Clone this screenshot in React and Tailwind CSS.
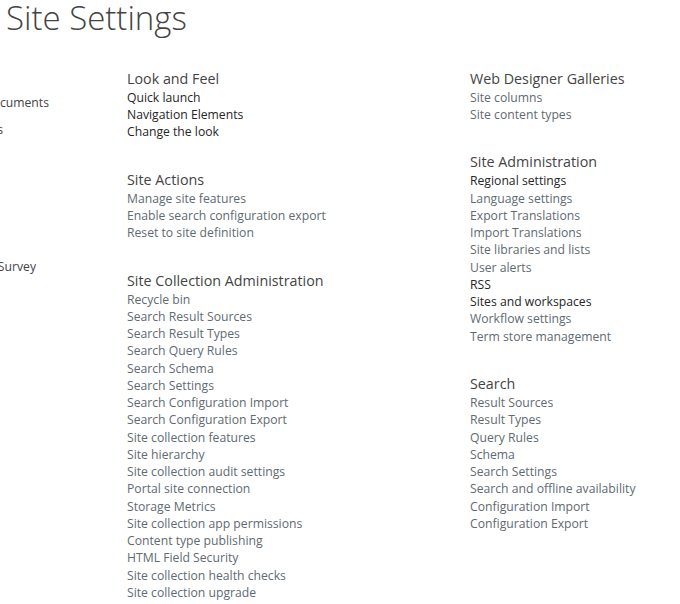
const LOOK_AND_FEEL = [
  { label: "Quick launch", dark: true },
  { label: "Navigation Elements", dark: true },
  { label: "Change the look", dark: true },
];

const SITE_ACTIONS = [
  { label: "Manage site features" },
  { label: "Enable search configuration export" },
  { label: "Reset to site definition" },
];

const SITE_COLLECTION_ADMIN = [
  { label: "Recycle bin" },
  { label: "Search Result Sources" },
  { label: "Search Result Types" },
  { label: "Search Query Rules" },
  { label: "Search Schema" },
  { label: "Search Settings" },
  { label: "Search Configuration Import" },
  { label: "Search Configuration Export" },
  { label: "Site collection features" },
  { label: "Site hierarchy" },
  { label: "Site collection audit settings" },
  { label: "Portal site connection" },
  { label: "Storage Metrics" },
  { label: "Site collection app permissions" },
  { label: "Content type publishing" },
  { label: "HTML Field Security" },
  { label: "Site collection health checks" },
  { label: "Site collection upgrade" },
];

const WEB_DESIGNER = [{ label: "Site columns" }, { label: "Site content types" }];

const SITE_ADMIN = [
  { label: "Regional settings", dark: true },
  { label: "Language settings" },
  { label: "Export Translations" },
  { label: "Import Translations" },
  { label: "Site libraries and lists" },
  { label: "User alerts" },
  { label: "RSS", dark: true },
  { label: "Sites and workspaces", dark: true },
  { label: "Workflow settings" },
  { label: "Term store management" },
];

const SEARCH = [
  { label: "Result Sources" },
  { label: "Result Types" },
  { label: "Query Rules" },
  { label: "Schema" },
  { label: "Search Settings" },
  { label: "Search and offline availability" },
  { label: "Configuration Import" },
  { label: "Configuration Export" },
];

/**
 * Bloque de enlaces con su título.
 */
function LinkSection({ title, items }) {
  return (
    <section className="mb-[28.3px]">
      <h2 className="text-[14.3px] leading-[21px] text-[#444]">{title}</h2>
      <ul>
        {items.map((item) => (
          <li key={item.label} className="text-[12.2px] leading-[17.25px] whitespace-nowrap">
            <a
              href="#"
              className={item.dark ? "text-[#262626]" : "text-[#5f6a72]"}
            >
              {item.label}
            </a>
          </li>
        ))}
      </ul>
    </section>
  );
}

/**
 * Elemento de la navegación lateral, recortado por la izquierda
 * (la página está desplazada horizontalmente).
 */
function NavItem({ label, endX }) {
  return (
    <div className="h-[27.3px] overflow-hidden" style={{ width: endX }}>
      <div className="flex h-full items-center justify-end whitespace-nowrap text-[12.2px] text-[#444]">
        {label}
      </div>
    </div>
  );
}

export default function App() {
  return (
    <div className="h-[604px] w-[680px] overflow-hidden bg-white font-['Open_Sans','Noto_Sans',sans-serif]">
      <h1 className="pl-[6px] text-[33px] font-light leading-[36px] text-[#444]">
        Site Settings
      </h1>

      <div className="mt-[31.5px] flex">
        <nav className="w-[127px] shrink-0 pt-[22px]">
          <NavItem label="Documents" endX={49} />
          <NavItem label="Tasks" endX={3} />
          <div className="h-[109.2px]" />
          <NavItem label="Customer Survey" endX={36} />
        </nav>

        <div className="w-[343px] shrink-0">
          <LinkSection title="Look and Feel" items={LOOK_AND_FEEL} />
          <LinkSection title="Site Actions" items={SITE_ACTIONS} />
          <LinkSection title="Site Collection Administration" items={SITE_COLLECTION_ADMIN} />
        </div>

        <div className="flex-1">
          <LinkSection title="Web Designer Galleries" items={WEB_DESIGNER} />
          <LinkSection title="Site Administration" items={SITE_ADMIN} />
          <LinkSection title="Search" items={SEARCH} />
        </div>
      </div>
    </div>
  );
}
